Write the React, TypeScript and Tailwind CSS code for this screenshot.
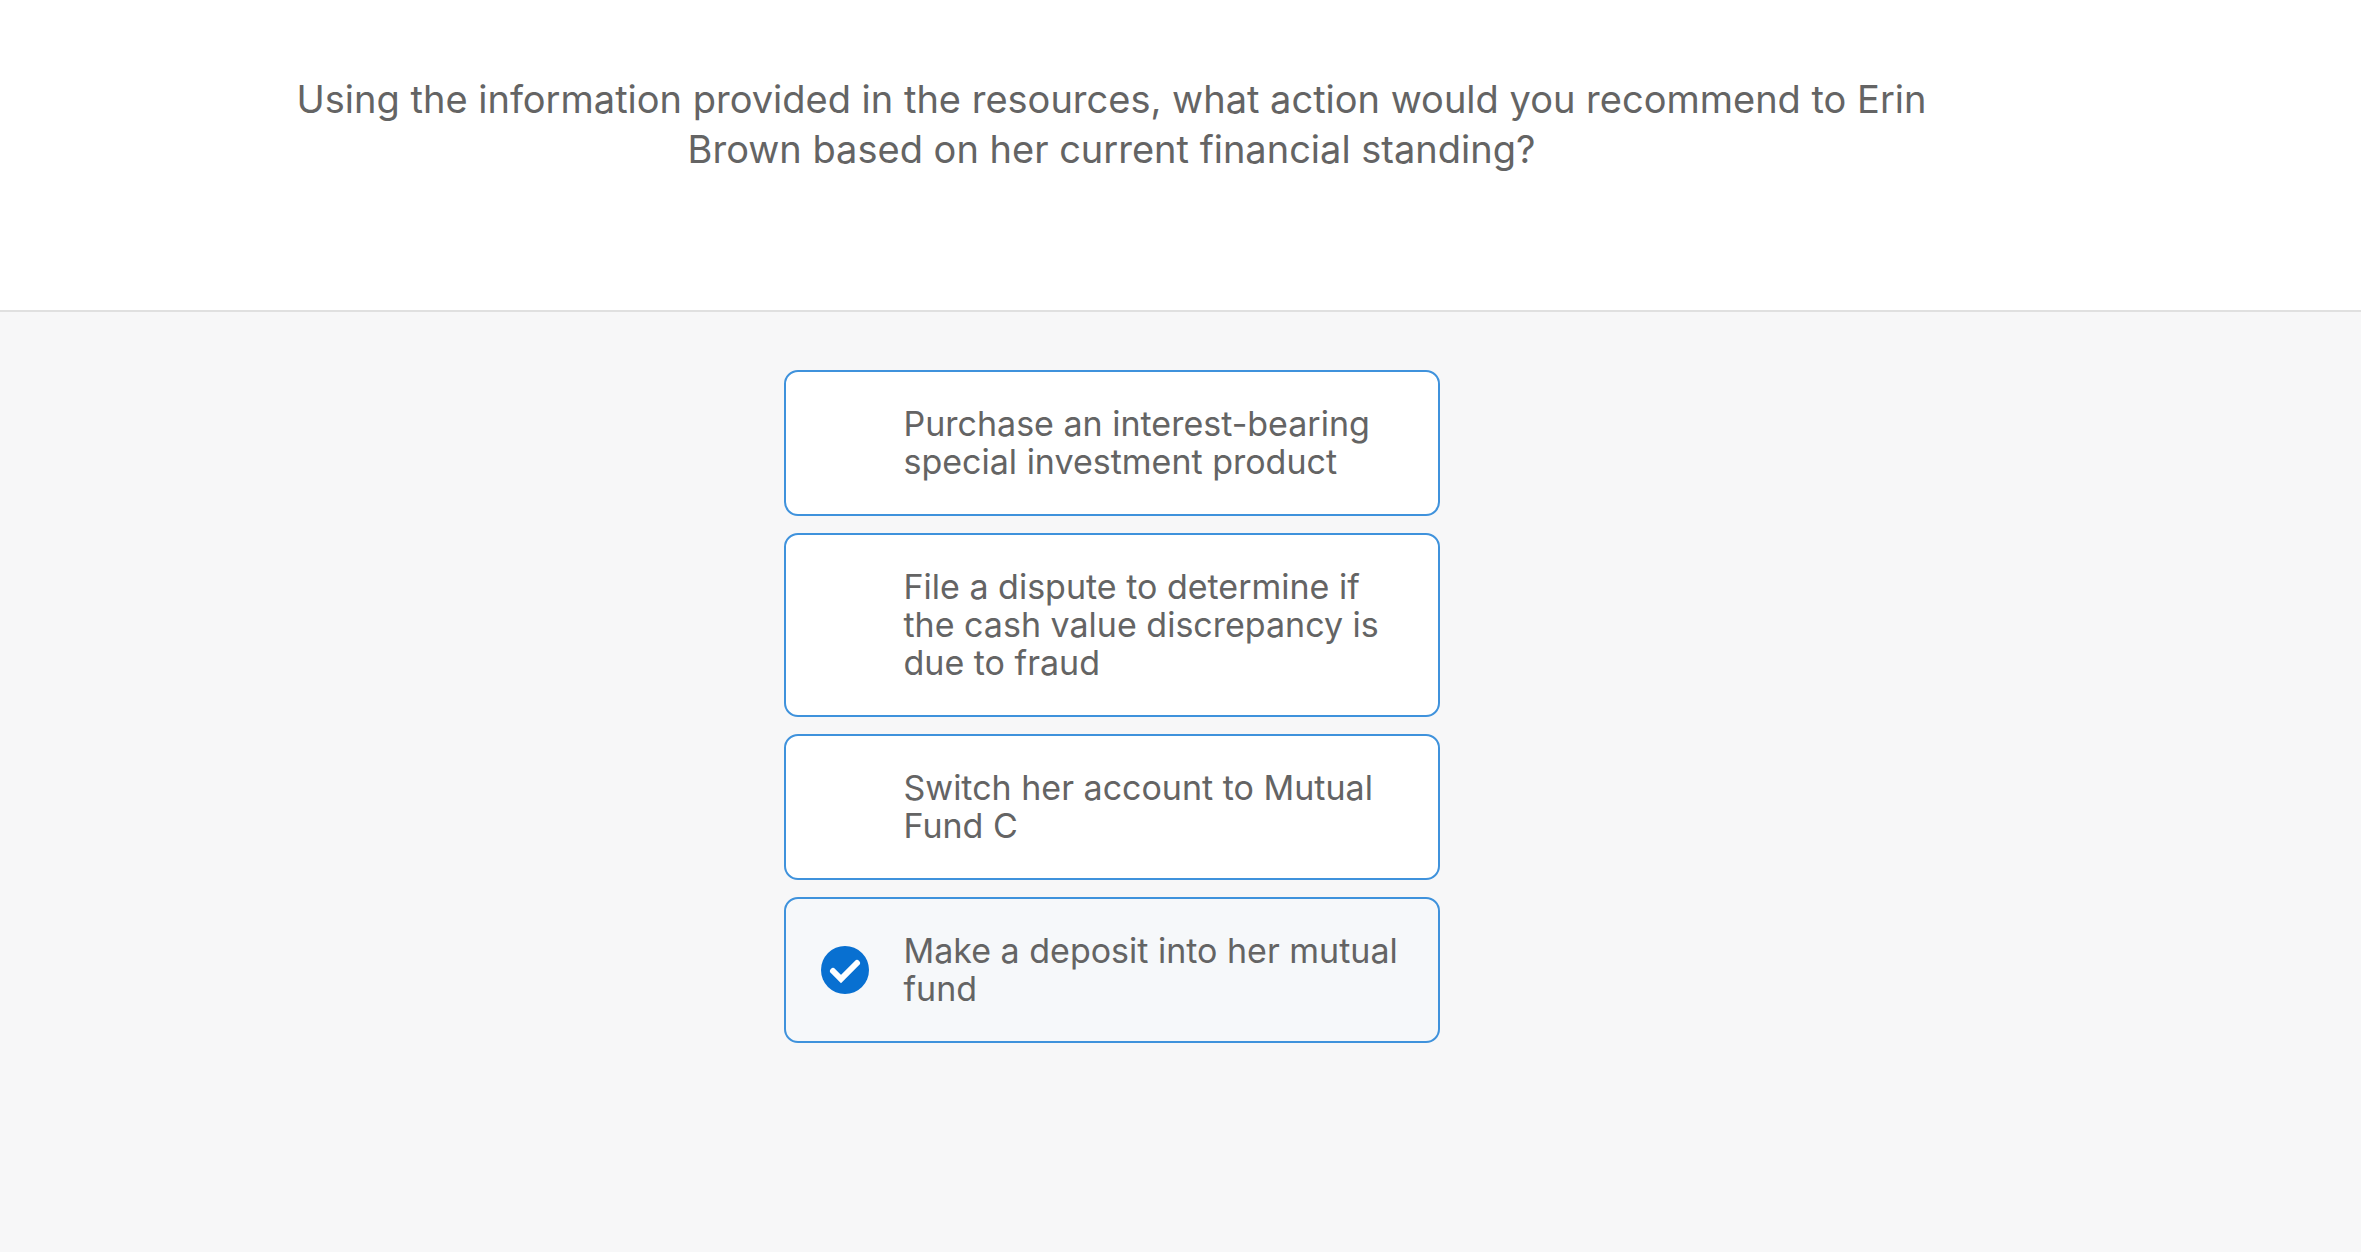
import { useState } from "react";

const options = [
  { id: "invest", label: "Purchase an interest-bearing special investment product" },
  { id: "dispute", label: "File a dispute to determine if the cash value discrepancy is due to fraud" },
  { id: "switch", label: "Switch her account to Mutual Fund C" },
  { id: "deposit", label: "Make a deposit into her mutual fund" },
];

interface AnswerOptionProps {
  id: string;
  label: string;
  checked: boolean;
  onSelect: (id: string) => void;
}

function AnswerOption({ id, label, checked, onSelect }: AnswerOptionProps) {
  return (
    <label
      htmlFor={id}
      className={`flex cursor-pointer items-center gap-[35px] rounded-[14px] border-2 border-[#3f92dc] py-[33px] pl-[35px] pr-8 ${
        checked ? "bg-[#f6f8fa]" : "bg-white"
      }`}
    >
      <span className="grid size-12 shrink-0">
        <input
          type="radio"
          id={id}
          name="answer"
          checked={checked}
          onChange={() => onSelect(id)}
          className="col-start-1 row-start-1 size-full cursor-pointer appearance-none rounded-full"
        />
        {checked && (
          <svg viewBox="0 0 48 48" aria-hidden="true" className="pointer-events-none col-start-1 row-start-1 size-full">
            <circle cx="24" cy="24" r="24" fill="#0870d1" />
            <path
              d="M12 25 20 33 36 17"
              fill="none"
              stroke="#fff"
              strokeWidth="6"
              strokeLinecap="round"
            />
          </svg>
        )}
      </span>
      <span className="min-w-0 flex-1 text-[34px] leading-[38px]">{label}</span>
    </label>
  );
}

export default function App() {
  const [selected, setSelected] = useState("deposit");

  return (
    <main className="flex min-h-screen flex-col bg-[#f7f7f8] font-['Inter',sans-serif] text-[#646464]">
      <header className="border-b-2 border-[#e0e0e0] bg-white pb-[136px] pl-10 pr-[178px] pt-[74px]">
        <h1 id="question" className="mx-auto max-w-[1660px] text-center text-[38px] font-normal leading-[50px]">
          Using the information provided in the resources, what action would you recommend to Erin Brown based on
          her current financial standing?
        </h1>
      </header>
      <section className="flex-1 pb-10 pl-10 pr-[178px] pt-[58px]">
        <div role="radiogroup" aria-labelledby="question" className="mx-auto flex max-w-[656px] flex-col gap-[17px]">
          {options.map((option) => (
            <AnswerOption
              key={option.id}
              id={option.id}
              label={option.label}
              checked={selected === option.id}
              onSelect={setSelected}
            />
          ))}
        </div>
      </section>
    </main>
  );
}
